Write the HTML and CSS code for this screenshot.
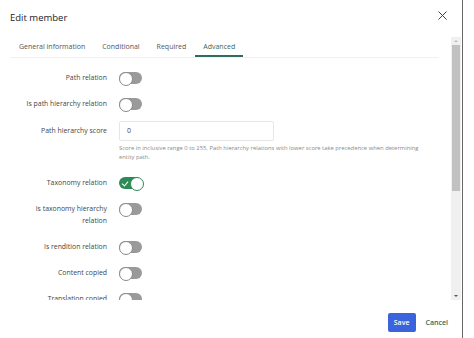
FILE: index.html
```html
<!DOCTYPE html>
<html lang="en">
<head>
    <meta charset="UTF-8">
    <title>Edit member</title>
    <link rel="stylesheet" href="styles.css">
</head>
<body>
    <div class="dialog">
        <div class="dialog-header">
            <h1>Edit member</h1>
            <button class="close-btn" aria-label="Close">
                <svg width="9" height="9" viewBox="0 0 9 9"><path d="M0.5 0.5 L8.5 8.5 M8.5 0.5 L0.5 8.5" stroke="#444" stroke-width="1" fill="none"/></svg>
            </button>
        </div>

        <div class="dialog-body">
            <div class="scroll-content">
                <div class="tabs">
                    <span class="tab">General information</span>
                    <span class="tab">Conditional</span>
                    <span class="tab">Required</span>
                    <span class="tab active">Advanced</span>
                </div>

                <div class="form">
                    <div class="row">
                        <label class="label">Path relation</label>
                        <span class="toggle"></span>
                    </div>
                    <div class="row">
                        <label class="label">Is path hierarchy relation</label>
                        <span class="toggle"></span>
                    </div>
                    <div class="row row-input">
                        <label class="label">Path hierarchy score</label>
                        <div class="field">
                            <div class="text-input">0</div>
                            <p class="help">Score in inclusive range 0 to 255. Path hierarchy relations with lower score take precedence when determining entity path.</p>
                        </div>
                    </div>
                    <div class="row">
                        <label class="label">Taxonomy relation</label>
                        <span class="toggle on"></span>
                    </div>
                    <div class="row">
                        <label class="label">Is taxonomy hierarchy relation</label>
                        <span class="toggle"></span>
                    </div>
                    <div class="row">
                        <label class="label">Is rendition relation</label>
                        <span class="toggle"></span>
                    </div>
                    <div class="row">
                        <label class="label">Content copied</label>
                        <span class="toggle"></span>
                    </div>
                    <div class="row">
                        <label class="label">Translation copied</label>
                        <span class="toggle"></span>
                    </div>
                </div>
            </div>

            <div class="scrollbar">
                <span class="arrow up"></span>
                <div class="track">
                    <div class="thumb"></div>
                </div>
                <span class="arrow down"></span>
            </div>
        </div>

        <div class="dialog-footer">
            <button class="btn-save">Save</button>
            <button class="btn-cancel">Cancel</button>
        </div>
    </div>
</body>
</html>
```

FILE: styles.css
```css
:root {
    --text-primary: #222;
    --text-label: #444;
    --text-help: #8a8a8a;
    --accent: #2f6b5e;
    --toggle-on: #2e8b57;
    --toggle-off: #9a9a9a;
    --save-blue: #3b63db;
    --border-light: #e6e6e6;
}

* {
    margin: 0;
    padding: 0;
    box-sizing: border-box;
}

body {
    font-family: 'Open Sans', 'Noto Sans', sans-serif;
    background: #fff;
    color: var(--text-primary);
    width: 474px;
    height: 338px;
    overflow: hidden;
}

.dialog {
    width: 463px;
    height: 338px;
    border-right: 1px solid #666;
    display: flex;
    flex-direction: column;
}

.dialog-header {
    height: 37px;
    display: flex;
    justify-content: space-between;
    align-items: center;
    padding: 0 15px 3px 10px;
}

.dialog-header h1 {
    font-size: 9.5px;
    font-weight: 400;
    color: #222;
}

.close-btn {
    border: none;
    background: none;
    display: flex;
    margin-bottom: 4px;
}

.dialog-body {
    height: 263px;
    display: flex;
    overflow: hidden;
}

.scroll-content {
    flex: 1;
    padding-right: 12px;
}

.tabs {
    display: flex;
    margin-left: 10px;
    height: 21px;
    border-bottom: 1px solid #f0f0f0;
    padding-left: 9px;
    gap: 17px;
}

.tab {
    font-size: 7px;
    color: #555;
    line-height: 20px;
}

.tab.active {
    color: var(--accent);
    padding: 0 8px;
    margin-left: -8px;
    border-bottom: 2px solid var(--accent);
}

.form {
    padding-top: 7px;
}

.row {
    display: flex;
    align-items: flex-start;
    gap: 12px;
    padding: 7px 0;
}

.label {
    width: 107px;
    flex-shrink: 0;
    text-align: right;
    font-size: 6.9px;
    line-height: 12px;
    color: var(--text-label);
    padding-left: 24px;
}

.toggle {
    width: 23px;
    height: 12px;
    border-radius: 6px;
    background: var(--toggle-off);
    position: relative;
    flex-shrink: 0;
}

.toggle::after {
    content: '';
    position: absolute;
    top: 0;
    left: 0;
    width: 12px;
    height: 12px;
    border-radius: 50%;
    background: #fff;
    border: 1px solid #8a8a8a;
}

.toggle.on {
    background: var(--toggle-on);
}

.toggle.on::after {
    left: 11px;
    border-color: var(--toggle-on);
}

.toggle.on::before {
    content: '';
    position: absolute;
    left: 4px;
    top: 3px;
    width: 3px;
    height: 5px;
    border-right: 1.2px solid #fff;
    border-bottom: 1.2px solid #fff;
    transform: rotate(40deg);
}

.row-input {
    padding: 4px 0 8px;
}

.row-input .label {
    line-height: 20px;
}

.field {
    width: 303px;
}

.text-input {
    width: 155px;
    height: 20px;
    border: 1px solid var(--border-light);
    border-radius: 2px;
    font-size: 7px;
    line-height: 18px;
    padding-left: 7px;
    color: #444;
}

.help {
    font-size: 5.85px;
    line-height: 9px;
    color: var(--text-help);
    margin-top: 3px;
}

.scrollbar {
    width: 10px;
    margin-right: 1px;
    background: #f0f0f0;
    display: flex;
    flex-direction: column;
    align-items: center;
}

.arrow {
    height: 8px;
    width: 100%;
    display: flex;
    justify-content: center;
    align-items: center;
}

.arrow::after {
    content: '';
    border-left: 2px solid transparent;
    border-right: 2px solid transparent;
}

.arrow.up::after {
    border-bottom: 2px solid #bbb;
}

.arrow.down::after {
    border-top: 2px solid #555;
}

.track {
    flex: 1;
    width: 100%;
}

.thumb {
    width: 8px;
    height: 146px;
    margin: 0 auto;
    background: #c1c1c1;
}

.dialog-footer {
    flex: 1;
    display: flex;
    justify-content: flex-end;
    align-items: center;
    gap: 10px;
    padding: 6px 14px 0 0;
}

.btn-save {
    width: 28px;
    height: 19px;
    border: none;
    border-radius: 2px;
    background: var(--save-blue);
    color: #fff;
    font-family: inherit;
    font-size: 7px;
    font-weight: 600;
}

.btn-cancel {
    border: none;
    background: none;
    color: var(--accent);
    font-family: inherit;
    font-size: 7px;
    font-weight: 600;
}
```
